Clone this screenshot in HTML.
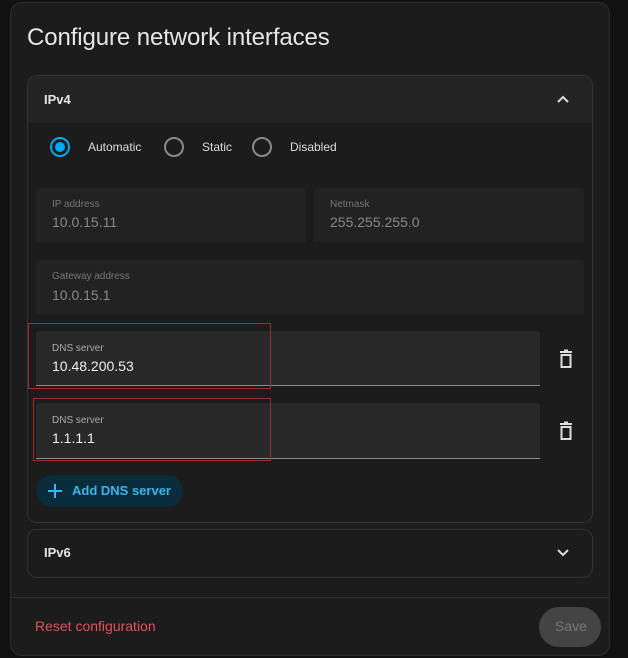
<!DOCTYPE html>
<html><head><style>
*{box-sizing:border-box;margin:0;padding:0}
body{width:628px;height:658px;background:#111;font-family:"Liberation Sans",sans-serif;position:relative;overflow:hidden;color:#e1e1e1}
.a{position:absolute}
.card{left:10px;top:2px;width:600px;height:654px;background:#1c1c1c;border:1px solid #2e2e2e;border-radius:12px}
.title{left:27px;top:24px;font-size:24px;color:#e6e6e6;letter-spacing:-0.1px}
.panel{border:1px solid #333;border-radius:10px;background:#1c1c1c}
.fld{background:#222;border-radius:4px 4px 0 0}
.lbl{font-size:10px;color:#777}
.val{font-size:14px;color:#888}
.dns{background:#292929;border-bottom:1px solid #8a8a8a;border-radius:4px 4px 0 0}
.radio{width:20px;height:20px;border:2px solid #8a8a8a;border-radius:50%}
.rl{font-size:12px;color:#ddd}
</style></head><body>
<div class="a card"></div>
<div class="a title">Configure network interfaces</div>
<div class="a panel" style="left:27px;top:75px;width:566px;height:448px"></div>
<div class="a" style="left:28px;top:76px;width:564px;height:47px;background:#242424;border-radius:10px 10px 0 0"></div>
<div class="a" style="left:44px;top:92px;font-size:13px;font-weight:bold;color:#e6e6e6">IPv4</div>
<svg class="a" style="left:555px;top:91px" width="16" height="16" viewBox="0 0 16 16"><path d="M3 11l5-5 5 5" stroke="#ddd" stroke-width="2" fill="none"/></svg>
<div class="a radio" style="left:50px;top:137px;border-color:#03a9f4"><div style="margin:3px;width:10px;height:10px;border-radius:50%;background:#03a9f4"></div></div>
<div class="a rl" style="left:88px;top:140px">Automatic</div>
<div class="a radio" style="left:164px;top:137px"></div>
<div class="a rl" style="left:202px;top:140px">Static</div>
<div class="a radio" style="left:252px;top:137px"></div>
<div class="a rl" style="left:290px;top:140px">Disabled</div>
<div class="a fld" style="left:36px;top:188px;width:270px;height:54px"></div>
<div class="a lbl" style="left:52px;top:199px">IP address</div>
<div class="a val" style="left:52px;top:214px">10.0.15.11</div>
<div class="a fld" style="left:314px;top:188px;width:270px;height:54px"></div>
<div class="a lbl" style="left:330px;top:199px">Netmask</div>
<div class="a val" style="left:330px;top:214px">255.255.255.0</div>
<div class="a fld" style="left:36px;top:260px;width:548px;height:54px"></div>
<div class="a lbl" style="left:52px;top:271px">Gateway address</div>
<div class="a val" style="left:52px;top:287px">10.0.15.1</div>
<div class="a dns" style="left:36px;top:331px;width:504px;height:55px"></div>
<div class="a lbl" style="left:52px;top:343px;color:#aaa">DNS server</div>
<div class="a" style="left:52px;top:358px;font-size:14px;color:#eee">10.48.200.53</div>
<div class="a dns" style="left:36px;top:403px;width:504px;height:56px"></div>
<div class="a lbl" style="left:52px;top:415px;color:#aaa">DNS server</div>
<div class="a" style="left:52px;top:430px;font-size:14px;color:#eee">1.1.1.1</div>
<div class="a" style="left:28px;top:323px;width:243px;height:66px;border:1px solid #a52a2a"></div>
<div class="a" style="left:33px;top:398px;width:238px;height:63px;border:1px solid #a52a2a"></div>
<svg class="a" style="left:556px;top:349px" width="20" height="20" viewBox="0 0 20 20"><path d="M4 3h12M8 1.5h4M5.5 6h9v12h-9z" stroke="#ddd" stroke-width="2" fill="none"/></svg>
<svg class="a" style="left:556px;top:421px" width="20" height="20" viewBox="0 0 20 20"><path d="M4 3h12M8 1.5h4M5.5 6h9v12h-9z" stroke="#ddd" stroke-width="2" fill="none"/></svg>
<div class="a" style="left:36px;top:475px;width:147px;height:32px;border-radius:16px;background:#0b2d3b"></div>
<svg class="a" style="left:47px;top:483px" width="16" height="16"><path d="M8 1v14M1 8h14" stroke="#3ab6ee" stroke-width="2"/></svg>
<div class="a" style="left:72px;top:483px;font-size:13px;font-weight:bold;color:#3ab6ee">Add DNS server</div>
<div class="a panel" style="left:27px;top:529px;width:566px;height:49px"></div>
<div class="a" style="left:44px;top:545px;font-size:13px;font-weight:bold;color:#e6e6e6">IPv6</div>
<svg class="a" style="left:555px;top:545px" width="16" height="16" viewBox="0 0 16 16"><path d="M3 5l5 5 5-5" stroke="#ddd" stroke-width="2" fill="none"/></svg>
<div class="a" style="left:11px;top:597px;width:598px;height:1px;background:#2e2e2e"></div>
<div class="a" style="left:35px;top:618px;font-size:14px;color:#e0535b">Reset configuration</div>
<div class="a" style="left:539px;top:607px;width:62px;height:40px;border-radius:20px;background:#444"></div>
<div class="a" style="left:555px;top:618px;font-size:14px;color:#777">Save</div>
</body></html>
